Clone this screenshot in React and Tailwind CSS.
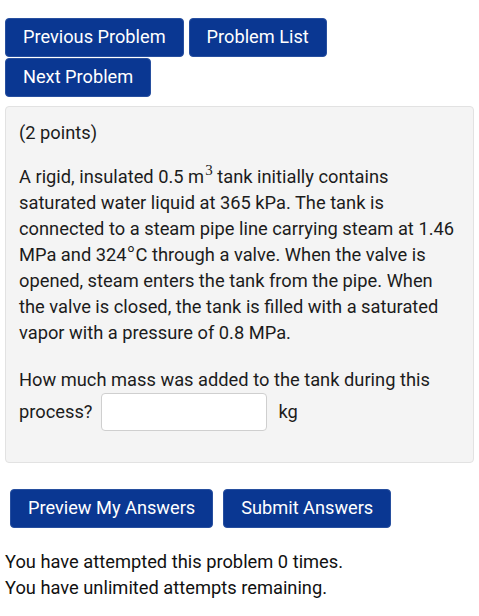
function NavButton({ children }) {
  return (
    <button className="h-[39px] px-[17px] rounded-[4px] bg-[#0a3792] border border-[#274f9f] text-white text-[18.2px] leading-none">
      {children}
    </button>
  );
}

const serif = { fontFamily: '"Liberation Serif", serif' };

export default function App() {
  return (
    <div className="min-h-screen bg-white text-[#1c1c1c] pl-[5px] pt-[18px]" style={{ fontFamily: 'Roboto, "Liberation Sans", sans-serif' }}>
      {/* navegación de problemas */}
      <div className="flex flex-wrap gap-x-[5px] gap-y-[1px] w-[330px]">
        <NavButton>Previous Problem</NavButton>
        <NavButton>Problem List</NavButton>
        <NavButton>Next Problem</NavButton>
      </div>

      <div className="mt-[9px] w-[469px] bg-[#f4f4f4] border border-[#e2e2e2] rounded-[4px] pl-[13px] pr-[14px] pt-[13px] pb-[31px] text-[18.3px] leading-[26px]">
        <p>(2 points)</p>

        <p className="mt-[18px]">
          A rigid, insulated 0.5&nbsp;m
          <sup className="text-[15px] -top-[0.55em] ml-[1px]" style={serif}>3</sup>
          {' '}tank initially contains saturated water liquid at 365 kPa. The tank is connected to a steam pipe line carrying steam at 1.46 MPa and 324
          <sup className="text-[19px] -top-[0.3em] -ml-[2px] -mr-[1px]" style={serif}>∘</sup>
          C through a valve. When the valve is opened, steam enters the tank from the pipe. When the valve is closed, the tank is filled with a saturated vapor with a pressure of 0.8 MPa.
        </p>

        <div className="mt-[21px]">
          <p>How much mass was added to the tank during this</p>
          <div className="flex items-center h-[38px]">
            <span>process?</span>
            <input type="text" className="ml-[9px] w-[166px] h-[38px] bg-white border border-[#cfcfcf] rounded-[4px]" />
            <span className="ml-[11px]">kg</span>
          </div>
        </div>
      </div>

      <div className="flex gap-[10px] mt-[26px] ml-[5px]">
        <NavButton>Preview My Answers</NavButton>
        <NavButton>Submit Answers</NavButton>
      </div>

      <div className="mt-[21px] text-[18.3px] leading-[26px] text-[#111]">
        <p>You have attempted this problem 0 times.</p>
        <p>You have unlimited attempts remaining.</p>
      </div>
    </div>
  );
}
